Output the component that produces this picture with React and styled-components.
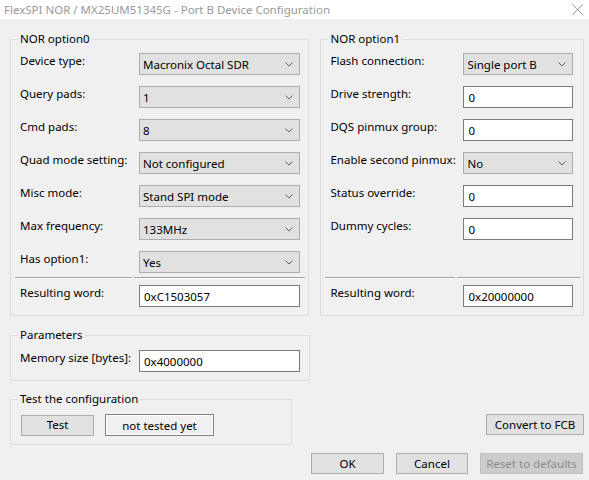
import React from "react";
import styled, { createGlobalStyle } from "styled-components";

const GlobalStyle = createGlobalStyle`
  html, body {
    margin: 0;
    padding: 0;
    background: #f0f0f0;
  }
  body {
    font-family: "Noto Sans", "Open Sans", sans-serif;
    font-size: 11.5px;
    color: #000;
  }
`;

const Window = styled.div`
  width: 589px;
  height: 480px;
  background: #f0f0f0;
  display: flex;
  flex-direction: column;
  overflow: hidden;
`;

const TitleBar = styled.div`
  height: 19px;
  background: #fff;
  display: flex;
  align-items: center;
  justify-content: space-between;
  padding: 0 6px 0 4px;
  color: #999;
  font-size: 11.5px;
  line-height: 16px;
  flex-shrink: 0;
`;

const Body = styled.div`
  display: flex;
  flex-direction: column;
  padding: 20px 5px 0 10px;
`;

const TopRow = styled.div`
  display: flex;
  gap: 11px;
  align-items: stretch;
`;

const Group = styled.div`
  position: relative;
  box-sizing: border-box;
  width: ${(p) => p.$width}px;
  border: 1px solid #dcdcdc;
  padding: ${(p) => p.$pad || "13px 8px 8px 9px"};
  display: flex;
  flex-direction: ${(p) => (p.$row ? "row" : "column")};
  gap: ${(p) => (p.$row ? "11px" : "0")};
  align-items: ${(p) => (p.$row ? "center" : "stretch")};
  margin-top: ${(p) => p.$top || 0}px;
`;

const Legend = styled.span`
  position: absolute;
  top: -9px;
  left: 7px;
  padding: 0 2px;
  background: #f0f0f0;
  line-height: 16px;
`;

const Rows = styled.div`
  display: flex;
  flex-direction: column;
  gap: 11px;
`;

const Row = styled.div`
  display: flex;
  align-items: flex-start;
`;

const Label = styled.div`
  width: ${(p) => p.$w}px;
  flex-shrink: 0;
  line-height: 16px;
  white-space: nowrap;
`;

const Combo = styled.div`
  box-sizing: border-box;
  width: ${(p) => p.$w}px;
  height: 22px;
  background: #e1e1e1;
  border: 1px solid #adadad;
  display: flex;
  align-items: center;
  justify-content: space-between;
  padding: 1px 6px 0 3px;
  white-space: nowrap;
`;

const TextBox = styled.input`
  box-sizing: border-box;
  width: ${(p) => p.$w}px;
  height: 22px;
  background: #fff;
  border: 1px solid #7a7a7a;
  padding: 1px 4px 0;
  margin: 0;
  font: inherit;
  color: #000;
  outline: none;
`;

const Separator = styled.div`
  display: flex;
  gap: 2px;
  margin: ${(p) => (p.$auto ? "auto" : "4px")} -5px 0 -5px;
`;

const SepLine = styled.div`
  height: 1px;
  background: #a0a0a0;
  border-bottom: 1px solid #fff;
  width: ${(p) => (p.$w ? `${p.$w}px` : "auto")};
  flex: ${(p) => (p.$w ? "none" : 1)};
`;

const ResultRow = styled(Row)`
  margin-top: 6px;
`;

const BottomArea = styled.div`
  display: flex;
  justify-content: space-between;
`;

const LeftColumn = styled.div`
  display: flex;
  flex-direction: column;
`;

const Button = styled.div`
  box-sizing: border-box;
  width: ${(p) => p.$w}px;
  height: 21px;
  display: flex;
  align-items: center;
  justify-content: center;
  background: ${(p) => (p.$disabled ? "#cccccc" : "#e1e1e1")};
  border: 1px solid ${(p) => (p.$disabled ? "#bfbfbf" : "#adadad")};
  color: ${(p) => (p.$disabled ? "#8a8a8a" : "#000")};
  line-height: 16px;
  white-space: nowrap;
`;

const StatusBox = styled.div`
  box-sizing: border-box;
  width: 109px;
  height: 22px;
  display: flex;
  align-items: center;
  justify-content: center;
  border: 1px solid #828282;
  box-shadow: inset 0 0 0 1px #fff;
  background: #f0f0f0;
`;

const ConvertButton = styled(Button)`
  align-self: flex-end;
  margin-bottom: 10px;
`;

const DialogButtons = styled.div`
  display: flex;
  justify-content: flex-end;
  gap: 12px;
  margin-top: 8px;
  padding-right: 1px;
`;

const Chevron = () => (
  <svg width="8" height="5" viewBox="0 0 8 5">
    <polyline
      points="0.5,0.5 4,4 7.5,0.5"
      fill="none"
      stroke="#606060"
      strokeWidth="1"
    />
  </svg>
);

const CloseIcon = () => (
  <svg width="11" height="11" viewBox="0 0 11 11">
    <path d="M0.5 0.5 L10.5 10.5 M10.5 0.5 L0.5 10.5" stroke="#999" strokeWidth="1" />
  </svg>
);

const option0 = [
  ["Device type:", "Macronix Octal SDR"],
  ["Query pads:", "1"],
  ["Cmd pads:", "8"],
  ["Quad mode setting:", "Not configured"],
  ["Misc mode:", "Stand SPI mode"],
  ["Max frequency:", "133MHz"],
  ["Has option1:", "Yes"],
];

const option1 = [
  ["Flash connection:", "Single port B", true],
  ["Drive strength:", "0"],
  ["DQS pinmux group:", "0"],
  ["Enable second pinmux:", "No", true],
  ["Status override:", "0"],
  ["Dummy cycles:", "0"],
];

export default function App() {
  return (
    <Window>
      <GlobalStyle />
      <TitleBar>
        <span>FlexSPI NOR / MX25UM51345G - Port B Device Configuration</span>
        <CloseIcon />
      </TitleBar>
      <Body>
        <TopRow>
          <Group $width={300}>
            <Legend>NOR option0</Legend>
            <Rows>
              {option0.map(([label, value]) => (
                <Row key={label}>
                  <Label $w={119}>{label}</Label>
                  <Combo $w={161}>
                    {value}
                    <Chevron />
                  </Combo>
                </Row>
              ))}
            </Rows>
            <Separator>
              <SepLine $w={117} />
              <SepLine />
            </Separator>
            <ResultRow>
              <Label $w={119}>Resulting word:</Label>
              <TextBox $w={161} value="0xC1503057" readOnly />
            </ResultRow>
          </Group>
          <Group $width={264}>
            <Legend>NOR option1</Legend>
            <Rows>
              {option1.map(([label, value, combo]) => (
                <Row key={label}>
                  <Label $w={133}>{label}</Label>
                  {combo ? (
                    <Combo $w={110}>
                      {value}
                      <Chevron />
                    </Combo>
                  ) : (
                    <TextBox $w={110} value={value} readOnly />
                  )}
                </Row>
              ))}
            </Rows>
            <Separator $auto>
              <SepLine $w={130} />
              <SepLine />
            </Separator>
            <ResultRow>
              <Label $w={133}>Resulting word:</Label>
              <TextBox $w={110} value="0x20000000" readOnly />
            </ResultRow>
          </Group>
        </TopRow>
        <BottomArea>
          <LeftColumn>
            <Group $width={300} $top={19} $pad="14px 8px 8px 9px">
              <Legend>Parameters</Legend>
              <Row>
                <Label $w={119}>Memory size [bytes]:</Label>
                <TextBox $w={161} value="0x4000000" readOnly />
              </Row>
            </Group>
            <Group $width={282} $top={18} $row $pad="14px 8px 8px 10px">
              <Legend>Test the configuration</Legend>
              <Button $w={73}>Test</Button>
              <StatusBox>not tested yet</StatusBox>
            </Group>
          </LeftColumn>
          <ConvertButton $w={98}>Convert to FCB</ConvertButton>
        </BottomArea>
        <DialogButtons>
          <Button $w={73}>OK</Button>
          <Button $w={72}>Cancel</Button>
          <Button $w={103} $disabled>
            Reset to defaults
          </Button>
        </DialogButtons>
      </Body>
    </Window>
  );
}
